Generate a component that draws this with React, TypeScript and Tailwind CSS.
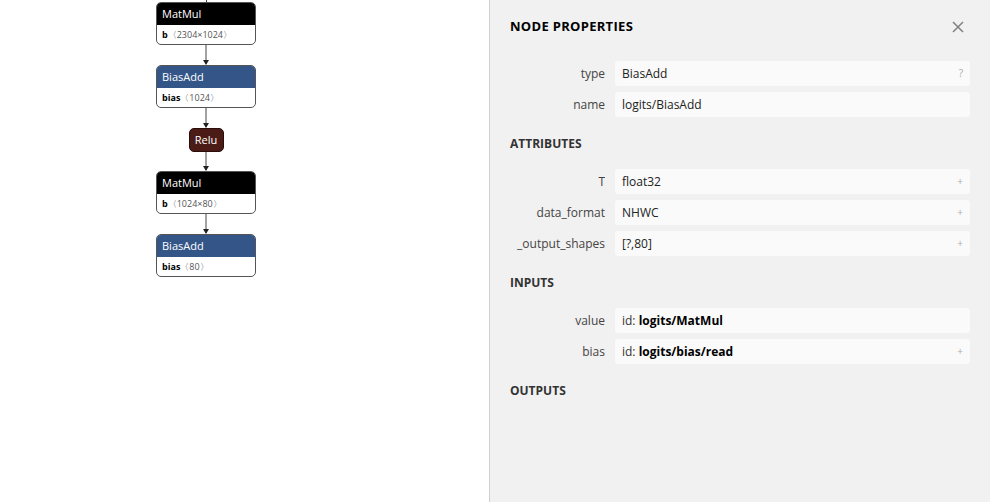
import { Fragment } from "react";

type GraphNode =
  | { kind: "op"; name: string; color: string; arg: string; shape: string }
  | { kind: "act"; name: string };

const nodes: GraphNode[] = [
  { kind: "op", name: "MatMul", color: "bg-black", arg: "b", shape: "〈2304×1024〉" },
  { kind: "op", name: "BiasAdd", color: "bg-[#335588]", arg: "bias", shape: "〈1024〉" },
  { kind: "act", name: "Relu" },
  { kind: "op", name: "MatMul", color: "bg-black", arg: "b", shape: "〈1024×80〉" },
  { kind: "op", name: "BiasAdd", color: "bg-[#335588]", arg: "bias", shape: "〈80〉" },
];

const props = [{ label: "type", value: "BiasAdd", mark: "?" }, { label: "name", value: "logits/BiasAdd" }];

const sections = [
  {
    title: "ATTRIBUTES",
    rows: [
      { label: "T", value: "float32", mark: "+" },
      { label: "data_format", value: "NHWC", mark: "+" },
      { label: "_output_shapes", value: "[?,80]", mark: "+" },
    ],
  },
  {
    title: "INPUTS",
    rows: [
      { label: "value", id: "logits/MatMul" },
      { label: "bias", id: "logits/bias/read", mark: "+" },
    ],
  },
  { title: "OUTPUTS", rows: [] },
];

const Edge = ({ h }: { h: number }) => (
  <svg width="10" height={h} viewBox={`0 0 10 ${h}`} className="block">
    <line x1="5" y1="0" x2="5" y2={h - 1} stroke="#444" strokeWidth="1" />
    <path d={`M2 ${h - 5} L5 ${h} L8 ${h - 5} Z`} fill="#222" />
  </svg>
);

const Node = ({ node }: { node: GraphNode }) => {
  if (node.kind === "act") {
    return (
      <div className="h-[24px] w-[35px] rounded-[5px] border border-[#2a0d0a] bg-[#4b1b16] flex items-center justify-center text-[11px] text-white">
        {node.name}
      </div>
    );
  }
  return (
    <div className="w-[100px] rounded-[5px] border border-[#555] overflow-hidden bg-white">
      <div className={`h-[22px] ${node.color} px-[5px] flex items-center text-[11px] text-white`}>{node.name}</div>
      <div className="h-[19px] px-[5px] flex items-center text-[9px] text-black">
        <span className="font-bold">{node.arg}</span>
        <span className="text-[#555]">{node.shape}</span>
      </div>
    </div>
  );
};

const Row = ({ label, value, id, mark }: { label: string; value?: string; id?: string; mark?: string }) => (
  <div className="flex items-center gap-[10px]">
    <div className="w-[95px] text-right text-[12px] text-[#444] truncate">{label}</div>
    <div className="flex-1 h-[25px] rounded-[3px] bg-[#fafafa] pl-[7px] pr-[7px] flex items-center text-[12px] text-[#222]">
      <span className="flex-1">
        {id ? (
          <>
            <span className="text-[#333]">id: </span>
            <span className="font-bold text-black">{id}</span>
          </>
        ) : (
          value
        )}
      </span>
      {mark && <span className="text-[10px] text-[#aaa]">{mark}</span>}
    </div>
  </div>
);

export default function App() {
  const gaps = [20, 20, 19, 20];
  return (
    <div className="flex w-[990px] h-[502px] overflow-hidden bg-white" style={{ fontFamily: '"Open Sans", "Noto Sans", sans-serif' }}>
      <div className="w-[489px] shrink-0 pl-[156px]">
        <div className="w-[100px] flex flex-col items-center">
          <div className="w-px h-[2px] bg-[#444]" />
          {nodes.map((n, i) => (
            <Fragment key={i}>
              <Node node={n} />
              {i < gaps.length && <Edge h={gaps[i]} />}
            </Fragment>
          ))}
        </div>
      </div>

      <div className="flex-1 border-l border-[#cfcfcf] bg-[#f1f1f1] px-[20px]">
        <div className="h-[53px] pt-[1px] flex items-center justify-between">
          <h1 className="text-[13px] font-bold tracking-[0.3px] text-black">NODE PROPERTIES</h1>
          <svg width="12" height="12" viewBox="0 0 12 12" className="mr-[6px]">
            <path d="M1 1 L11 11 M11 1 L1 11" stroke="#808080" strokeWidth="1.5" />
          </svg>
        </div>
        <div className="mt-[8px] flex flex-col gap-[6px]">
          {props.map((r) => (
            <Row key={r.label} {...r} />
          ))}
        </div>
        {sections.map((s) => (
          <div key={s.title}>
            <div className="h-[52px] pt-[2px] flex items-center text-[12px] font-bold text-[#333]">{s.title}</div>
            <div className="flex flex-col gap-[6px]">
              {s.rows.map((r) => (
                <Row key={r.label} {...r} />
              ))}
            </div>
          </div>
        ))}
      </div>
    </div>
  );
}
